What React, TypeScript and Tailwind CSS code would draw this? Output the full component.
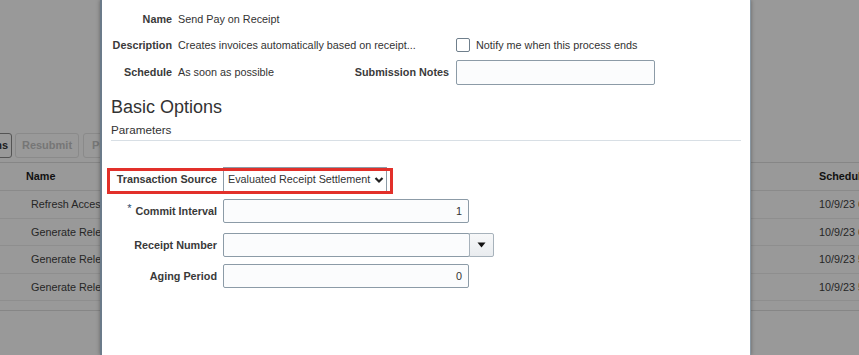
const jobs = [
  { name: "Refresh Access Control Rules", time: "10/9/23 6:00 AM" },
  { name: "Generate Release Payments", time: "10/9/23 6:00 AM" },
  { name: "Generate Release Payments", time: "10/9/23 5:30 AM" },
  { name: "Generate Release Payments", time: "10/9/23 5:30 AM" },
];

const Field = ({ value, width }: { value: string; width: string }) => (
  <div className={`${width} flex h-[24px] items-center justify-end rounded-[2px] border border-[#8c9ba7] bg-[#fbfcfd] pr-[6px] text-[10.8px] text-[#333]`}>
    {value}
  </div>
);

const App = () => {
  return (
    <div className="relative h-[355px] w-[859px] overflow-hidden bg-[#999999] font-['Liberation_Sans',Arial,sans-serif]">
      {/* page behind the dialog, dimmed */}
      <div className="pt-[133px]">
        <div className="-ml-[44px] flex h-[25px] gap-[3px]">
          <button className="w-[56px] rounded-[3px] border border-[#545454] pr-[3px] text-right text-[11px] font-bold text-[#1c1c1c]">
            Actions
          </button>
          <button className="w-[64px] rounded-[3px] border border-[#8a8a8a] text-[11px] font-bold text-[#767676]">
            Resubmit
          </button>
          <button className="ml-[1px] w-[90px] rounded-[3px] border border-[#8a8a8a] pl-[8px] text-left text-[11px] font-bold text-[#767676]">
            Put On Hold
          </button>
        </div>
        <div className="mt-[4px] border-t border-b border-[#868686] text-[10.8px]">
          <div className="flex h-[28px] items-center border-b border-[#8a8a8a] font-bold text-[#111]">
            <div className="w-[20px]" />
            <div className="flex-1 pl-[6px]">Name</div>
            <div className="w-[47px] whitespace-nowrap pl-[7px]">Scheduled Time</div>
          </div>
          {jobs.map((job, i) => (
            <div key={i} className="flex h-[27.5px] items-center border-b border-[#8e8e8e] text-[#262626]">
              <div className="w-[20px]" />
              <div className="flex-1 whitespace-nowrap pl-[11px]">{job.name}</div>
              <div className="w-[47px] whitespace-nowrap pl-[7px]">{job.time}</div>
            </div>
          ))}
          <div className="h-[9px]" />
        </div>
      </div>

      {/* dialog */}
      <div className="absolute left-[100px] top-0 h-[355px] w-[651px] border-l-2 border-r border-l-[#6b7b8a] border-r-[#8896a1] bg-white text-[10.8px] text-[#333] shadow-[0_0_4px_rgba(0,0,0,0.35)]">
        <div className="mt-[6px] flex h-[26px] items-center">
          <div className="w-[70px] text-right font-bold text-[#3a3a3a]">Name</div>
          <div className="ml-[6px] whitespace-nowrap">Send Pay on Receipt</div>
        </div>
        <div className="flex h-[26px] items-center">
          <div className="w-[70px] text-right font-bold text-[#3a3a3a]">Description</div>
          <div className="ml-[6px] w-[172px] whitespace-nowrap">Creates invoices automatically based on receipt...</div>
          <div className="w-[99px]" />
          <div className="ml-[7px] h-[14px] w-[14px] rounded-[2px] border border-[#6f7f8c] bg-white" />
          <div className="ml-[6px] whitespace-nowrap">Notify me when this process ends</div>
        </div>
        <div className="flex h-[28px] items-center">
          <div className="w-[70px] text-right font-bold text-[#3a3a3a]">Schedule</div>
          <div className="ml-[6px] w-[172px] whitespace-nowrap">As soon as possible</div>
          <div className="w-[99px] whitespace-nowrap text-right font-bold text-[#3a3a3a]">Submission Notes</div>
          <div className="ml-[7px] h-[25px] w-[199px] rounded-[2px] border border-[#8c9ba7] bg-[#fbfcfd]" />
        </div>

        <div className="ml-[9px] mt-[10px] text-[18px] leading-[22px] text-[#333]">Basic Options</div>
        <div className="ml-[9px] mr-[9px] mt-[5px] border-b border-[#d8dfe5] pb-[3px] text-[11.7px] leading-[14px]">
          Parameters
        </div>

        <div className="relative mt-[26px] flex h-[25px] items-center">
          <div className="w-[115px] text-right font-bold text-[#3a3a3a]">Transaction Source</div>
          <div className="ml-[6px] flex h-[25px] w-[164px] items-center justify-between border border-[#8c9ba7] bg-white pl-[4px] pr-[2px]">
            <span className="whitespace-nowrap">Evaluated Receipt Settlement</span>
            <svg width="10" height="8" viewBox="0 0 10 8">
              <path d="M1.5 2 L5 5.5 L8.5 2" fill="none" stroke="#222" strokeWidth="2.2" />
            </svg>
          </div>
          <div className="absolute left-[5px] top-[1px] h-[26px] w-[286px] border-[3px] border-[#e2302a]" />
        </div>

        <div className="mt-[7px] flex items-center">
          <div className="flex w-[115px] items-start justify-end gap-[4px] font-bold text-[#3a3a3a]">
            <span className="text-[11px] font-normal leading-[10px] text-[#2a4a6b]">*</span>
            <span>Commit Interval</span>
          </div>
          <div className="ml-[6px]">
            <Field value="1" width="w-[246px]" />
          </div>
        </div>

        <div className="mt-[10px] flex items-center">
          <div className="w-[115px] text-right font-bold text-[#3a3a3a]">Receipt Number</div>
          <div className="ml-[6px] flex">
            <Field value="" width="w-[247px]" />
            <div className="-ml-[1px] flex h-[24px] w-[25px] items-center justify-center rounded-r-[2px] border border-[#a7b2bb] bg-gradient-to-b from-[#f7f8f9] to-[#e9ecef]">
              <svg width="9" height="6" viewBox="0 0 9 6">
                <path d="M0.5 0.5 H8.5 L4.5 5.5 Z" fill="#111" />
              </svg>
            </div>
          </div>
        </div>

        <div className="mt-[7px] flex items-center">
          <div className="w-[115px] text-right font-bold text-[#3a3a3a]">Aging Period</div>
          <div className="ml-[6px]">
            <Field value="0" width="w-[246px]" />
          </div>
        </div>
      </div>
    </div>
  );
};

export default App;
